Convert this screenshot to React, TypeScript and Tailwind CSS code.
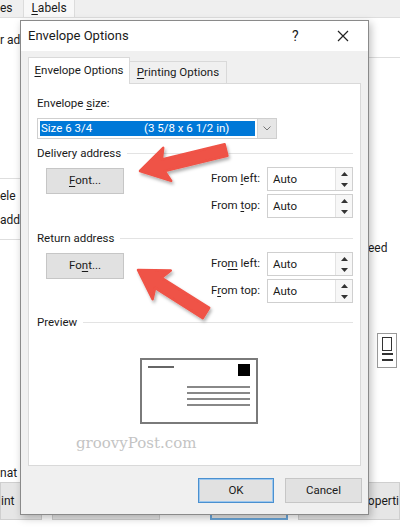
import React from "react";

const font = { fontFamily: 'Roboto, "Noto Sans", Arial, sans-serif' };

function U({ children }: { children: React.ReactNode }) {
  return <span className="underline underline-offset-2 decoration-1">{children}</span>;
}

function Spin() {
  return (
    <div className="flex w-[17px] flex-col items-center justify-center border-l border-[#e3e3e3] bg-[#f7f7f7]">
      <div className="flex h-[11px] items-center">
        <svg width="7" height="4" viewBox="0 0 7 4">
          <polygon points="3.5,0 7,4 0,4" fill="#333" />
        </svg>
      </div>
      <div className="flex h-[11px] items-center">
        <svg width="7" height="4" viewBox="0 0 7 4">
          <polygon points="0,0 7,0 3.5,4" fill="#333" />
        </svg>
      </div>
    </div>
  );
}

function Field({ label }: { label: React.ReactNode }) {
  return (
    <div className="flex items-center">
      <span className="w-[56px] text-[11.5px] text-[#1a1a1a]">{label}</span>
      <div className="flex h-[24px] w-[86px] border border-[#cfcfcf] bg-white">
        <span className="flex-1 pl-[5px] text-[11.5px] leading-[22px] text-[#1a1a1a]">Auto</span>
        <Spin />
      </div>
    </div>
  );
}

function Group({ title }: { title: string }) {
  return (
    <div className="flex items-center gap-[6px]">
      <span className="text-[11.5px] leading-[16px] text-[#1a1a1a]">{title}</span>
      <div className="h-px flex-1 bg-[#e3e3e3]" />
    </div>
  );
}

function FontBtn({ label }: { label: React.ReactNode }) {
  return (
    <div className="ml-[9px] mt-px flex h-[26px] w-[78px] items-center justify-center border border-[#c6c6c6] bg-[#e1e1e1] text-[11.5px] text-[#1a1a1a]">
      {label}
    </div>
  );
}

function arrow(tip: [number, number], tail: [number, number]) {
  const dx = tail[0] - tip[0];
  const dy = tail[1] - tip[1];
  const len = Math.hypot(dx, dy);
  const ux = dx / len;
  const uy = dy / len;
  const nx = -uy;
  const ny = ux;
  const neck = [tip[0] + ux * 24, tip[1] + uy * 24];
  const barb = [tip[0] + ux * 28, tip[1] + uy * 28];
  const p = (x: number, y: number) => `${x.toFixed(1)},${y.toFixed(1)}`;
  return [
    p(tip[0], tip[1]),
    p(barb[0] + nx * 17, barb[1] + ny * 17),
    p(neck[0] + nx * 6, neck[1] + ny * 6),
    p(tail[0] + nx * 6, tail[1] + ny * 6),
    p(tail[0] - nx * 6, tail[1] - ny * 6),
    p(neck[0] - nx * 6, neck[1] - ny * 6),
    p(barb[0] - nx * 17, barb[1] - ny * 17),
  ].join(" ");
}

export default function App() {
  return (
    <div className="relative h-[531px] w-[400px] overflow-hidden bg-white text-[12px] text-[#1a1a1a]" style={font}>
      {/* window behind the dialog */}
      <div className="flex h-[18px] items-end border-b border-[#dedede] bg-[#efefef]">
        <span className="w-[23px] pb-[2px] leading-[14px]">es</span>
        <div className="flex h-[18px] w-[52px] items-center justify-center border-x border-[#dcdcdc] bg-[#f8f8f8]">
          <span>
            <U>L</U>abels
          </span>
        </div>
      </div>
      <div className="flex h-[40px] flex-col justify-between">
        <span className="mt-[14px] leading-[16px]">r add</span>
        <div className="ml-[368px] h-px bg-[#dedede]" />
      </div>
      <div className="h-[120px]" />
      <div className="flex h-[62px] w-[20px] flex-col border-y border-[#dedede]">
        <span className="mt-[9px] leading-[16px]">ele</span>
        <span className="mt-[8px] leading-[16px]">addr</span>
      </div>
      <div className="flex h-[93px] flex-col items-end">
        <span className="w-[32px] leading-[16px]">eed</span>
      </div>
      <div className="flex h-[35px] justify-end pr-[3px]">
        <div className="flex w-[20px] flex-col items-center border border-[#9a9a9a] bg-white pt-[3px]">
          <div className="h-[14px] w-[10px] border border-[#333]" />
          <div className="mt-[2px] h-[8px] w-[11px] border-y-2 border-[#333]" />
        </div>
      </div>
      <div className="flex h-[152px] flex-col justify-end">
        <span className="mb-px leading-[16px]">nat a</span>
        <div className="flex h-[38px] items-stretch gap-[10px]">
          <div className="flex w-[42px] items-center border border-[#cfcfcf] bg-[#e6e6e6]">int</div>
          <div className="w-[108px] border border-[#cfcfcf] bg-[#e6e6e6]" />
          <div className="ml-[40px] w-[78px] border-2 border-[#6aa5d8] bg-[#e6e6e6]" />
          <div className="flex w-[102px] items-center justify-end border border-[#cfcfcf] bg-[#e6e6e6]">
            operti
          </div>
        </div>
      </div>

      {/* dialog */}
      <div className="absolute left-[20px] top-[20px] flex h-[495px] w-[349px] flex-col border border-[#8a8a8a] bg-[#f0f0f0] shadow-[2px_3px_8px_rgba(0,0,0,0.25)]">
        <div className="flex h-[30px] items-center bg-white pl-[7px] text-[13px]">
          <span className="flex-1">Envelope Options</span>
          <span className="w-[26px] text-[14px]">?</span>
          <div className="flex w-[50px] justify-center">
            <svg width="12" height="12" viewBox="0 0 12 12">
              <path d="M1 1 L11 11 M11 1 L1 11" stroke="#222" strokeWidth="1.2" />
            </svg>
          </div>
        </div>
        <div className="flex flex-1 flex-col px-[7px]">
          <div className="mt-[6px] flex h-[26px] items-end text-[11.5px]">
            <div className="relative z-10 -mb-px flex h-[27px] w-[102px] items-center justify-center border-x border-t border-[#d9d9d9] bg-white">
              <span>
                <U>E</U>nvelope Options
              </span>
            </div>
            <div className="flex h-[22px] w-[97px] items-center justify-center border-r border-t border-[#d9d9d9] bg-[#f0f0f0]">
              <span>
                <U>P</U>rinting Options
              </span>
            </div>
          </div>
          <div className="flex h-[383px] flex-col border border-[#d9d9d9] bg-white pl-[8px] pr-[7px] pt-[11px]">
            <div className="text-[11.5px] leading-[16px]">
              Envelope <U>s</U>ize:
            </div>
            <div className="mt-[7px] flex h-[21px] w-[240px] border border-[#cfcfcf] bg-white">
              <div className="m-[2px] flex flex-1 items-center bg-[#0078d7] pl-[1px] text-[11.5px] text-white">
                <span className="w-[103px]">Size 6 3/4</span>
                <span>(3 5/8 x 6 1/2 in)</span>
              </div>
              <div className="flex w-[19px] items-center justify-center border-l border-[#d4d4d4] bg-[#e6e6e6]">
                <svg width="8" height="5" viewBox="0 0 8 5">
                  <polyline points="0.5,0.5 4,4 7.5,0.5" fill="none" stroke="#777" strokeWidth="1" />
                </svg>
              </div>
            </div>
            <div className="mt-[6px]">
              <Group title="Delivery address" />
            </div>
            <div className="mt-[6px] flex items-start justify-between">
              <FontBtn
                label={
                  <span>
                    <U>F</U>ont...
                  </span>
                }
              />
              <div className="flex flex-col gap-[3px]">
                <Field
                  label={
                    <span>
                      From <U>l</U>eft:
                    </span>
                  }
                />
                <Field
                  label={
                    <span>
                      From <U>t</U>op:
                    </span>
                  }
                />
              </div>
            </div>
            <div className="mt-[12px]">
              <Group title="Return address" />
            </div>
            <div className="mt-[6px] flex items-start justify-between">
              <FontBtn
                label={
                  <span>
                    Fo<U>n</U>t...
                  </span>
                }
              />
              <div className="flex flex-col gap-[3px]">
                <Field
                  label={
                    <span>
                      Fro<U>m</U> left:
                    </span>
                  }
                />
                <Field
                  label={
                    <span>
                      F<U>r</U>om top:
                    </span>
                  }
                />
              </div>
            </div>
            <div className="mt-[11px]">
              <Group title="Preview" />
            </div>
            <div className="ml-[103px] mt-[28px] flex h-[66px] w-[118px] flex-col border-2 border-[#7a7a7a] bg-white px-[6px] pt-[4px]">
              <div className="flex items-start justify-between">
                <div className="mt-[2px] h-[2px] w-[26px] bg-[#666]" />
                <div className="h-[12px] w-[12px] bg-black" />
              </div>
              <div className="ml-[39px] mt-[10px] flex flex-col gap-[4px]">
                <div className="h-[2px] bg-[#888]" />
                <div className="h-[2px] bg-[#888]" />
                <div className="h-[2px] bg-[#888]" />
                <div className="h-[2px] bg-[#888]" />
              </div>
            </div>
            <div
              className="ml-[39px] mt-[9px] text-[15px] leading-[20px] text-[#c4c4c4]"
              style={{ fontFamily: '"DejaVu Serif", "Liberation Serif", serif' }}
            >
              groovyPost.com
            </div>
          </div>
          <div className="mt-[12px] flex justify-end gap-[11px] text-[11.5px]">
            <div className="flex h-[25px] w-[76px] items-center justify-center border border-[#4a90d0] bg-[#e1e1e1] shadow-[inset_0_0_0_1px_#9cc7ee]">
              OK
            </div>
            <div className="-mr-px flex h-[25px] w-[77px] items-center justify-center border border-[#c6c6c6] bg-[#e1e1e1]">
              Cancel
            </div>
          </div>
        </div>
      </div>

      {/* callout arrows */}
      <svg className="pointer-events-none absolute left-0 top-0" width="400" height="531" viewBox="0 0 400 531">
        <defs>
          <filter id="sh" x="-20%" y="-20%" width="140%" height="140%">
            <feDropShadow dx="1.5" dy="2.5" stdDeviation="1.5" floodColor="#000" floodOpacity="0.3" />
          </filter>
        </defs>
        <g filter="url(#sh)" fill="#ef5246" stroke="#ef5246" strokeWidth="2.5" strokeLinejoin="round">
          <polygon points={arrow([140, 171], [226, 150])} />
          <polygon points={arrow([138, 270], [206, 313])} />
        </g>
      </svg>
    </div>
  );
}
